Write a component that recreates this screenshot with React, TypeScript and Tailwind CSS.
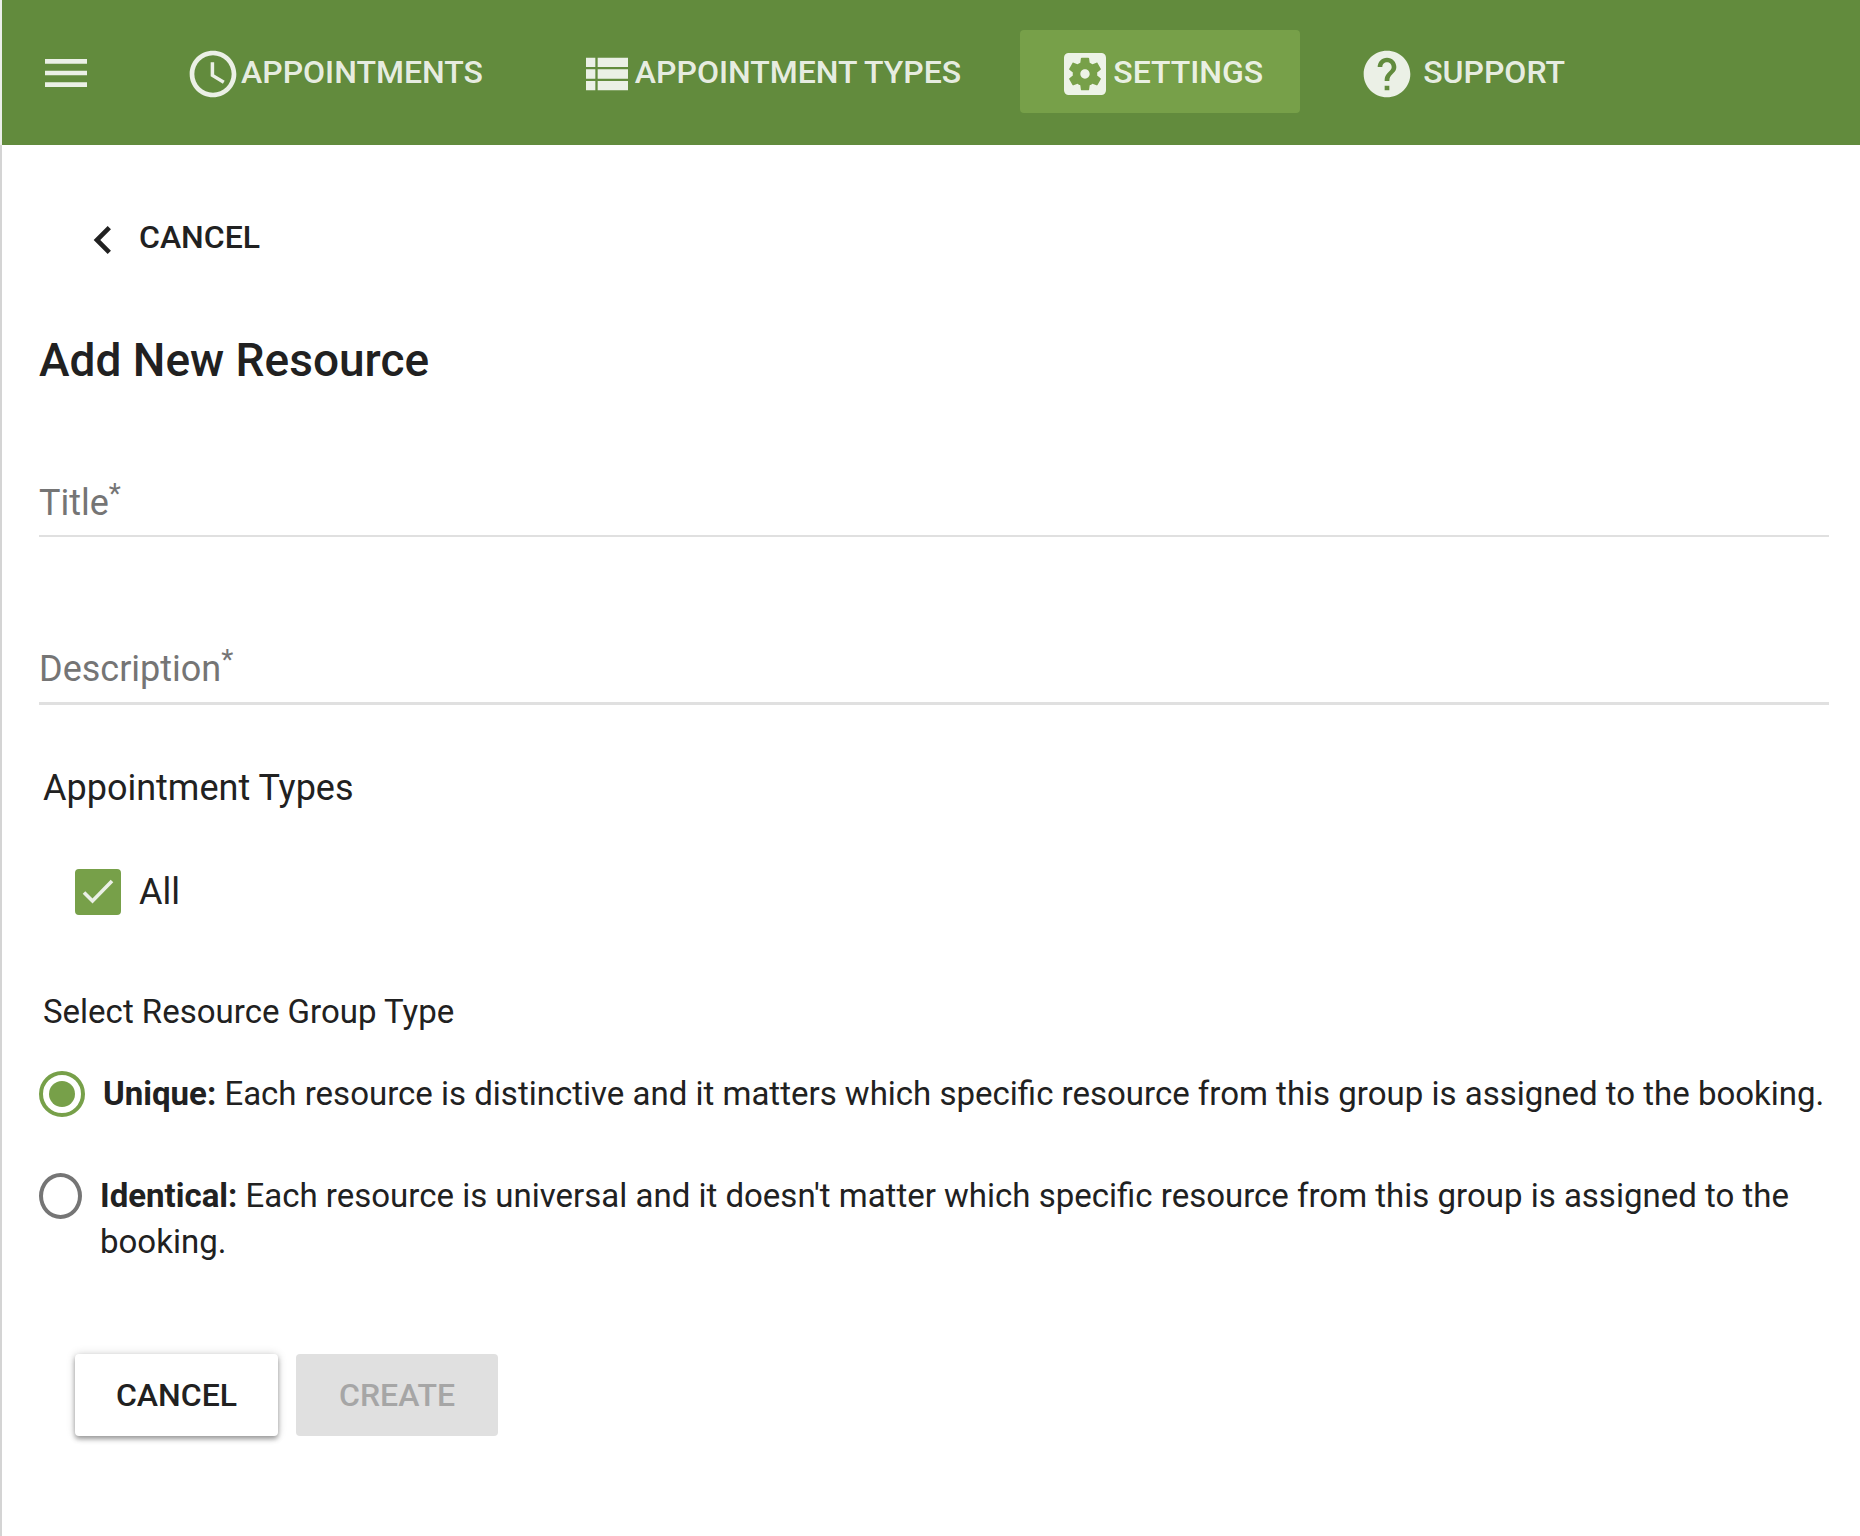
import { useState } from 'react';
import type { IconType } from 'react-icons';
import {
  MdAccessTime,
  MdChevronLeft,
  MdHelp,
  MdMenu,
  MdSettingsApplications,
  MdViewList,
} from 'react-icons/md';

type NavItem = {
  label: string;
  icon: IconType;
  active?: boolean;
  spaced?: boolean;
};

const navItems: NavItem[] = [
  { label: 'Appointments', icon: MdAccessTime },
  { label: 'Appointment Types', icon: MdViewList },
  { label: 'Settings', icon: MdSettingsApplications, active: true },
  { label: 'Support', icon: MdHelp, spaced: true },
];

const groupTypes = [
  {
    value: 'unique',
    name: 'Unique:',
    desc: 'Each resource is distinctive and it matters which specific resource from this group is assigned to the booking.',
  },
  {
    value: 'identical',
    name: 'Identical:',
    desc: "Each resource is universal and it doesn't matter which specific resource from this group is assigned to the booking.",
  },
];

function TopNav() {
  return (
    <header className="flex items-center border-l-2 border-[#eceeea] bg-[#628b3d] pt-[30px] pb-8 pl-9 text-white/87">
      <button type="button" aria-label="Menu" className="mt-0.5 mr-[54px]">
        <MdMenu size={56} />
      </button>
      <nav className="flex gap-[22px]">
        {navItems.map(({ label, icon: Icon, active, spaced }) => (
          <a
            key={label}
            href="#"
            className={`flex h-[83px] items-center rounded px-[37px] font-medium uppercase ${active ? 'bg-[#77a049]' : ''}`}
          >
            <Icon size={56} className="mt-1 shrink-0" />
            <span className={spaced ? 'ml-2' : ''}>{label}</span>
          </a>
        ))}
      </nav>
    </header>
  );
}

function FieldLabel({ id, text }: { id: string; text: string }) {
  return (
    <label htmlFor={id} className="pointer-events-none col-start-1 row-start-1 text-4xl/[46px] text-[#757575]">
      {text}
      <sup className="top-[-12px] text-[28px]">*</sup>
    </label>
  );
}

export default function App() {
  const [title, setTitle] = useState('');
  const [description, setDescription] = useState('');
  const [all, setAll] = useState(true);
  const [groupType, setGroupType] = useState('unique');

  return (
    <div className="flex min-h-screen flex-col bg-white font-[Roboto,sans-serif] text-[32px]/[46px] text-[#212121]">
      <TopNav />

      <main className="grow border-l-2 border-[#d4d4d4] pt-[50px] pr-[31px] pb-24 pl-[37px]">
        <a href="#" className="ml-9 inline-flex h-[84px] items-center font-medium uppercase">
          <MdChevronLeft size={56} className="mt-1.5" />
          <span className="ml-2">Cancel</span>
        </a>

        <h1 className="mt-[52px] text-[46px]/[56px] font-medium">Add New Resource</h1>

        <form onSubmit={(e) => e.preventDefault()}>
          <div className="mt-[92px] grid border-b-2 border-[#e0e0e0] pb-[9px]">
            {!title && <FieldLabel id="title" text="Title" />}
            <input
              id="title"
              aria-label="Title"
              value={title}
              onChange={(e) => setTitle(e.target.value)}
              className="col-start-1 row-start-1 h-[46px] w-full text-4xl/[46px] outline-none"
            />
          </div>

          <div className="mt-[109px] grid border-b-3 border-[#e0e0e0] pb-[10px]">
            {!description && <FieldLabel id="description" text="Description" />}
            <textarea
              id="description"
              aria-label="Description"
              rows={1}
              value={description}
              onChange={(e) => setDescription(e.target.value)}
              className="col-start-1 row-start-1 h-[46px] w-full resize-none text-4xl/[46px] outline-none"
            />
          </div>

          <h2 className="mt-[60px] ml-1 text-4xl/[46px]">Appointment Types</h2>

          <label className="mt-[58px] ml-9 flex w-fit items-center gap-[18px] text-4xl/[46px]">
            <span className="grid size-[46px] place-items-center">
              <input
                type="checkbox"
                checked={all}
                onChange={(e) => setAll(e.target.checked)}
                className="col-start-1 row-start-1 size-full appearance-none rounded border-4 border-[#757575] checked:border-[#77a049] checked:bg-[#77a049]"
              />
              {all && (
                <svg viewBox="0 0 46 46" className="pointer-events-none col-start-1 row-start-1 size-full" aria-hidden="true">
                  <path d="M9 23.5 17.5 32 37 12" fill="none" stroke="#ebf0e6" strokeWidth="3.6" />
                </svg>
              )}
            </span>
            All
          </label>

          <div role="radiogroup" aria-labelledby="group-type" className="mt-[74px] text-[33px]/[46px]">
            <p id="group-type" className="ml-1">
              Select Resource Group Type
            </p>
            <div className="mt-9 flex flex-col gap-14">
              {groupTypes.map(({ value, name, desc }) => (
                <label key={value} className="flex items-start gap-[18px]">
                  <input
                    type="radio"
                    name="groupType"
                    value={value}
                    checked={groupType === value}
                    onChange={() => setGroupType(value)}
                    className="grid h-[46px] w-[43px] shrink-0 appearance-none place-items-center rounded-[50%] border-4 border-[#757575] checked:w-[46px] checked:border-[#77a049] checked:before:size-[26px] checked:before:rounded-full checked:before:bg-[#77a049]"
                  />
                  <span>
                    <strong className="font-bold">{name}</strong> {desc}
                  </span>
                </label>
              ))}
            </div>
          </div>

          <div className="mt-[89px] ml-9 flex gap-[18px] font-medium">
            <button
              type="button"
              className="h-[82px] min-w-[203px] rounded bg-white uppercase shadow-[0_3px_5px_rgba(0,0,0,0.35),0_0_10px_rgba(0,0,0,0.16)]"
            >
              Cancel
            </button>
            <button type="submit" disabled className="h-[82px] min-w-[202px] rounded bg-[#e0e0e0] text-[#a6a6a6] uppercase">
              Create
            </button>
          </div>
        </form>
      </main>
    </div>
  );
}
